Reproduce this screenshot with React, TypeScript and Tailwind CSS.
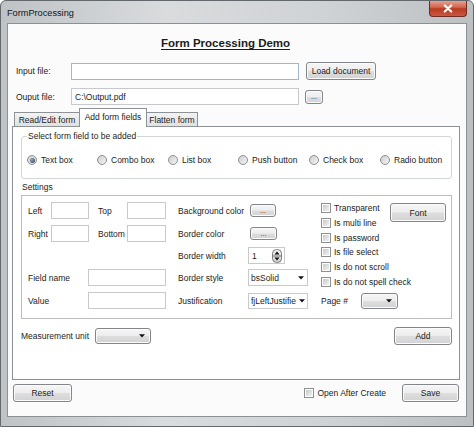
import clsx from 'clsx';
import type { ReactNode } from 'react';

type Box = { className?: string; children?: ReactNode };

function Label({ className, children }: Box) {
  return <span className={clsx('shrink-0 whitespace-nowrap leading-[12px]', className)}>{children}</span>;
}

function TextBox({ className, children, focused }: Box & { focused?: boolean }) {
  return (
    <div
      className={clsx(
        'flex shrink-0 items-center border bg-white px-[3px] leading-[12px]',
        focused ? 'border-[#9fb6cc]' : 'border-[#c7c9cc]',
        className,
      )}
    >
      {children}
    </div>
  );
}

// Win7 style push button: split gradient, dark rounded border
function PushButton({ className, children }: Box) {
  return (
    <div
      className={clsx(
        'flex shrink-0 items-center justify-center rounded-[3px] border border-[#82868a] leading-[12px]',
        'bg-[linear-gradient(180deg,#f6f6f6_0%,#ededed_48%,#dedede_52%,#d2d2d2_100%)] shadow-[inset_0_0_0_1px_#fbfbfb]',
        className,
      )}
    >
      {children}
    </div>
  );
}

function Arrow() {
  return (
    <svg width="6" height="4" viewBox="0 0 6 4">
      <path d="M0 0.3h6L3 3.6z" fill="#111" />
    </svg>
  );
}

function Combo({ className, text }: { className?: string; text: string }) {
  return (
    <div className={clsx('flex shrink-0 items-center border border-[#c7c9cc] bg-white', className)}>
      <span className="flex-1 whitespace-nowrap pl-[2px] leading-[12px]">{text}</span>
      <span className="flex w-[12px] shrink-0 justify-center">
        <Arrow />
      </span>
    </div>
  );
}

function GrayCombo({ className }: { className?: string }) {
  return (
    <PushButton className={clsx('justify-end pr-[5px]', className)}>
      <Arrow />
    </PushButton>
  );
}

function CheckBox() {
  return (
    <span className="block h-[10px] w-[10px] shrink-0 border border-[#8e8f8f] bg-white p-px">
      <span className="block h-full w-full bg-[linear-gradient(135deg,#c9c9c9,#f2f2f2)]" />
    </span>
  );
}

function Radio({ checked }: { checked?: boolean }) {
  return (
    <span className="flex h-[10px] w-[10px] shrink-0 items-center justify-center rounded-full border border-[#8e8f8f] bg-[linear-gradient(135deg,#cdcdcd,#f5f5f5)]">
      {checked && (
        <span className="h-[5px] w-[5px] rounded-full bg-[radial-gradient(circle_at_35%_35%,#9aaabb,#1d3145)]" />
      )}
    </span>
  );
}

function Spinner() {
  return (
    <svg width="10" height="14" viewBox="0 0 10 14">
      <defs>
        <linearGradient id="spin" x1="0" y1="0" x2="0" y2="1">
          <stop offset="0" stopColor="#f5f5f5" />
          <stop offset="1" stopColor="#cfcfcf" />
        </linearGradient>
      </defs>
      <rect x="0.5" y="0.5" width="9" height="13" rx="4" fill="url(#spin)" stroke="#7b7b7b" />
      <line x1="1" y1="7" x2="9" y2="7" stroke="#7b7b7b" />
      <path d="M2.5 5.4L5 2.6 7.5 5.4z" fill="#111" />
      <path d="M2.5 8.6L5 11.4 7.5 8.6z" fill="#111" />
    </svg>
  );
}

const radios: [string, string][] = [
  ['Text box', 'w-[70px]'],
  ['Combo box', 'w-[71px]'],
  ['List box', 'w-[70px]'],
  ['Push button', 'w-[71px]'],
  ['Check box', 'w-[71px]'],
  ['Radio button', 'w-[70px]'],
];

const checks = [
  'Transparent',
  'Is multi line',
  'Is password',
  'Is file select',
  'Is do not scroll',
  'Is do not spell check',
];

export default function App() {
  return (
    <div className="flex h-[427px] w-[474px] flex-col overflow-hidden rounded-t-[6px] border border-[#63686d] bg-[linear-gradient(90deg,#bfc3c6_0%,#d9dbdd_35%,#cfd2d5_70%,#bcc0c3_100%)] pb-[9px] pl-[6px] pr-[6px] font-['Liberation_Sans',Arial,sans-serif] text-[8.5px] text-[#1c1c1c]">
      {/* title bar */}
      <div className="flex h-[22px] shrink-0 items-start">
        <span className="mt-[6px] text-[9.2px] leading-[12px] text-[#151515]">FormProcessing</span>
        <div className="-mt-px ml-auto flex h-[17px] w-[38px] items-center justify-center rounded-b-[4px] border border-t-0 border-[#6e2c22] bg-[linear-gradient(180deg,#e9a99a_0%,#d2654f_45%,#b93a22_55%,#c8593f_100%)]">
          <svg width="10" height="9" viewBox="0 0 10 9">
            <path d="M1.8 1.5l6.4 6M8.2 1.5l-6.4 6" stroke="#fff" strokeWidth="2.2" strokeLinecap="round" />
          </svg>
        </div>
      </div>

      {/* client area */}
      <div className="flex h-[394px] w-[460px] flex-col border border-[#8b9095] bg-[#fbfbfb]">
        <div className="mt-[12px] pl-[153px] text-[11.5px] font-bold leading-[14px] underline underline-offset-[2px]">
          Form Processing Demo
        </div>

        <div className="mt-[12px] flex h-[18px] items-center pl-[8px]">
          <Label className="w-[55px]">Input file:</Label>
          <TextBox focused className="h-[17px] w-[228px]" />
          <PushButton className="ml-[7px] h-[18px] w-[70px]">Load document</PushButton>
        </div>

        <div className="mt-[8px] flex h-[17px] items-center pl-[8px]">
          <Label className="w-[55px]">Ouput file:</Label>
          <TextBox className="h-[17px] w-[228px]">{'C:\\Output.pdf'}</TextBox>
          <PushButton className="ml-[6px] h-[14px] w-[18px] text-[7px]">...</PushButton>
        </div>

        {/* tabs */}
        <div className="ml-[6px] mt-[3px] flex h-[18px] items-end">
          <div className="flex h-[14px] w-[65px] items-center justify-center border border-b-0 border-r-0 border-[#8d9296] bg-[linear-gradient(180deg,#f3f3f3,#e1e1e1)] leading-[12px]">
            Read/Edit form
          </div>
          <div className="relative z-10 -mb-px flex h-[19px] w-[68px] justify-center border border-b-0 border-[#8d9296] bg-white pt-[2px] leading-[12px]">
            Add form fields
          </div>
          <div className="flex h-[14px] w-[51px] items-center justify-center border border-b-0 border-l-0 border-[#8d9296] bg-[linear-gradient(180deg,#f3f3f3,#e1e1e1)] leading-[12px]">
            Flatten form
          </div>
        </div>

        <div className="ml-[4px] flex h-[254px] w-[448px] flex-col border border-[#8d9296] bg-white pl-[8px] pr-[7px] pt-[3px]">
          <fieldset className="h-[49px] w-[431px] rounded-[3px] border border-[#d3d6d9]">
            <legend className="ml-[5px] px-[1px] leading-[12px]">Select form field to be added</legend>
            <div className="mt-[12px] flex h-[12px] items-center pl-[5px]">
              {radios.map(([text, w], i) => (
                <div key={text} className={clsx('flex shrink-0 items-center', w)}>
                  <Radio checked={i === 0} />
                  <span className="ml-[4px] whitespace-nowrap leading-[12px]">{text}</span>
                </div>
              ))}
            </div>
          </fieldset>

          <div className="mt-[2px] pl-[1px] leading-[12px]">Settings</div>

          <div className="mt-[2px] flex h-[124px] w-[431px] border border-[#bdbdbd] pl-[6px] pt-[6px]">
            {/* positions and names */}
            <div className="flex flex-col">
              <div className="flex h-[17px] items-center">
                <Label className="w-[23px]">Left</Label>
                <TextBox className="h-[17px] w-[38px]" />
                <Label className="ml-[9px] w-[29px]">Top</Label>
                <TextBox className="h-[17px] w-[39px]" />
              </div>
              <div className="mt-[6px] flex h-[17px] items-center">
                <Label className="w-[23px]">Right</Label>
                <TextBox className="h-[17px] w-[38px]" />
                <Label className="ml-[9px] w-[29px]">Bottom</Label>
                <TextBox className="h-[17px] w-[39px]" />
              </div>
              <div className="mt-[27px] flex h-[17px] items-center">
                <Label className="w-[60px]">Field name</Label>
                <TextBox className="h-[17px] w-[78px]" />
              </div>
              <div className="mt-[6px] flex h-[17px] items-center">
                <Label className="w-[60px]">Value</Label>
                <TextBox className="h-[17px] w-[78px]" />
              </div>
            </div>

            {/* appearance */}
            <div className="ml-[12px] flex flex-col">
              <div className="flex h-[17px] items-center">
                <Label className="w-[72px]">Background color</Label>
                <PushButton className="h-[13px] w-[26px] text-[7px]">...</PushButton>
              </div>
              <div className="mt-[6px] flex h-[17px] items-center">
                <Label className="w-[72px]">Border color</Label>
                <PushButton className="h-[13px] w-[27px] text-[7px]">...</PushButton>
              </div>
              <div className="mt-[5px] flex h-[17px] items-center">
                <Label className="w-[70px]">Border width</Label>
                <TextBox className="h-[17px] w-[37px] justify-between pr-[2px]">
                  <span>1</span>
                  <Spinner />
                </TextBox>
              </div>
              <div className="mt-[5px] flex h-[17px] items-center">
                <Label className="w-[70px]">Border style</Label>
                <Combo className="h-[17px] w-[60px]" text="bsSolid" />
              </div>
              <div className="mt-[6px] flex h-[17px] items-center">
                <Label className="w-[70px]">Justification</Label>
                <Combo className="h-[16px] w-[60px]" text="fjLeftJustifie" />
              </div>
            </div>

            {/* flags */}
            <div className="ml-[13px] flex flex-col">
              <div className="flex">
                <div className="-mt-px flex w-[69px] flex-col">
                  {checks.map((c) => (
                    <div key={c} className="flex h-[14.7px] items-center">
                      <CheckBox />
                      <span className="ml-[3px] whitespace-nowrap leading-[12px]">{c}</span>
                    </div>
                  ))}
                </div>
                <PushButton className="mt-[1px] h-[19px] w-[56px]">Font</PushButton>
              </div>
              <div className="mt-[4px] flex h-[16px] items-center">
                <Label className="w-[40px]">Page #</Label>
                <GrayCombo className="h-[16px] w-[37px]" />
              </div>
            </div>
          </div>

          <div className="mt-[8px] flex h-[18px] items-center">
            <Label className="w-[74px]">Measurement unit</Label>
            <GrayCombo className="h-[16px] w-[56px]" />
            <PushButton className="ml-auto h-[18px] w-[58px]">Add</PushButton>
          </div>
        </div>

        <div className="mt-[4px] flex h-[18px] items-center pl-[5px] pr-[7px]">
          <PushButton className="h-[18px] w-[59px]">Reset</PushButton>
          <div className="ml-auto flex items-center">
            <CheckBox />
            <span className="ml-[3px] whitespace-nowrap leading-[12px]">Open After Create</span>
          </div>
          <PushButton className="ml-[16px] h-[18px] w-[57px]">Save</PushButton>
        </div>
      </div>
    </div>
  );
}
